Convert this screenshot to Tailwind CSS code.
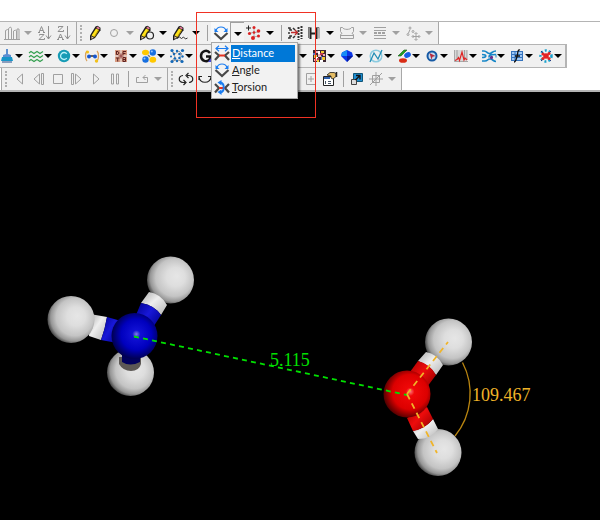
<!DOCTYPE html>
<html lang="en">
<head>
    <meta charset="UTF-8">
    <meta name="viewport" content="width=device-width, initial-scale=1.0">
    <title>Molecule Viewer</title>
    <script src="https://cdn.jsdelivr.net/npm/@tailwindcss/browser@4"></script>
</head>
<body class="bg-white font-['Lato',sans-serif]">
    <!-- Shared shapes -->
    <svg class="hidden">
        <symbol id="arrow" viewBox="0 0 8 4"><path d="M0 0h8L4 4z" fill="currentColor"/></symbol>
        <symbol id="pencil" viewBox="0 0 16 16">
            <path d="M3 15.500V10.500L8.500 1.500l2-.8 3 2v2.500L8 13z" fill="#1a1a1a"/>
            <path d="M4.500 10.500L9 3.500l2.800 1.500L7.500 12z" fill="#ffe21a"/>
            <path d="M7 11.800l4.300-7 .8.400-4.300 7z" fill="#a88a00"/>
            <path d="M9.300 3l1-1.500 2.500 1.500-.8 1.500z" fill="#e87b9c"/>
            <path d="M4.300 11.200l2.500 1.200-2.300 1.600z" fill="#e8c9a0"/>
        </symbol>
        <symbol id="angle" viewBox="0 0 16 16">
            <path d="M1.500 8l6.500 6 6.500-6" fill="none" stroke="#484848" stroke-width="2.200"/>
            <path d="M3 5.500C4.500 .8 11.500 .8 13 5.500" fill="none" stroke="#1a7cf0" stroke-width="1.200"/>
            <path d="M1.500 3v4h4zM14.500 3v4h-4z" fill="#1a7cf0"/>
        </symbol>
        <symbol id="distance" viewBox="0 0 16 16">
            <path d="M2 3.500h12M5 .8L2 3.500l3 2.700M11 .8l3 2.700-3 2.700" fill="none" stroke="#1a7cf0" stroke-width="1.200"/>
            <path d="M1 7l4 3.500L1 15M15 7l-4 3.500L15 15" fill="none" stroke="#484848" stroke-width="2.200"/>
            <path d="M5 10.500h6" stroke="#e43322" stroke-width="2"/>
        </symbol>
        <symbol id="torsion" viewBox="0 0 16 16">
            <path d="M1 5l4 4-4 4.500M15 5l-4 4 4 4.500" fill="none" stroke="#484848" stroke-width="2.200"/>
            <path d="M5 9h6" stroke="#e43322" stroke-width="2"/>
            <path d="M6 3.500c5 .5 5 9.500 0 10" fill="none" stroke="#1a7cf0" stroke-width="2"/>
            <path d="M3.500 3.500l4-2.500v5.500zM3.500 13l4-2.500V16z" fill="#1a7cf0"/>
        </symbol>
    </svg>

    <div class="relative flex min-h-screen flex-col">
        <header class="mt-[21px] border-y border-b-2 border-[#b4b4b4] bg-white">
            <!-- Sketch toolbar -->
            <div class="flex h-[22px]">
                <div class="flex w-[77px] border-r border-[#a8a8a8] bg-[#f0f0f0] pl-0.5">
                    <button aria-label="Chart" class="flex w-[33px] items-center text-[#a0a0a0]">
                        <span class="flex w-[19px] justify-center"><svg class="size-4" viewBox="0 0 16 16" fill="none" stroke="currentColor"><path d="M1.500 14.500v-9l2-1 1 1v9zM4.500 14.500v-11l2-1.500 1 1.500v11zM9.500 14.500V6l2-1 1 1v8.500zM13 14.500V4h2v10.500M0 14.500h16"/></svg></span>
                        <span class="flex w-[14px] justify-center"><svg class="h-1 w-2"><use href="#arrow"/></svg></span>
                    </button>
                    <button aria-label="Sort ascending" class="flex w-[19px] items-center justify-center text-[#909090]"><svg class="size-4" viewBox="0 0 16 16" fill="none" stroke="currentColor"><path d="M2 7.500l2.500-6 2.500 6M3 5.500h3M1 7.500h2M6 7.500h2M2.500 10.500v-1h4.500l-5 5h5.500v-1.500M11.500 1v13M9 10.500l2.500 3.500 2.500-3.500"/></svg></button>
                    <button aria-label="Sort descending" class="flex w-[19px] items-center justify-center text-[#909090]"><svg class="size-4" viewBox="0 0 16 16" fill="none" stroke="currentColor"><path d="M2.500 3V1.500H7l-5 5h5.500V5M2 14.500L4.500 9 7 14.500M3 12.500h3M1 14.500h2M6 14.500h2M11.500 1v13M9 10.500l2.500 3.500 2.500-3.500"/></svg></button>
                </div>
                <div class="flex w-[362px] border-r border-[#a8a8a8] bg-[#f0f0f0]">
                    <span class="flex w-2 items-center justify-center"><span class="h-4 border-l-2 border-dotted border-[#b0b0b0]"></span></span>
                    <button aria-label="Sketch atom" class="flex w-[19px] items-center justify-center"><svg class="size-4"><use href="#pencil"/></svg></button>
                    <button aria-label="Sketch ring" class="flex w-[33px] items-center text-[#a0a0a0]">
                        <span class="flex w-[19px] justify-center"><svg class="size-4" viewBox="0 0 16 16"><circle cx="8" cy="8" r="3.500" fill="none" stroke="currentColor"/></svg></span>
                        <span class="flex w-[14px] justify-center"><svg class="h-1 w-2"><use href="#arrow"/></svg></span>
                    </button>
                    <button aria-label="Sketch fragment" class="flex w-[33px] items-center">
                        <span class="flex w-[19px] justify-center"><svg class="size-4" viewBox="0 0 16 16"><use href="#pencil" x="-2" width="16" height="16"/><circle cx="11" cy="10.500" r="3.500" fill="#f0f0f0" stroke="#222" stroke-width="1.200"/></svg></span>
                        <span class="flex w-[14px] justify-center"><svg class="h-1 w-2"><use href="#arrow"/></svg></span>
                    </button>
                    <button aria-label="Sketch chain" class="flex w-[33px] items-center">
                        <span class="flex w-[19px] justify-center"><svg class="size-4" viewBox="0 0 16 16"><use href="#pencil" x="-2" width="16" height="16"/><path d="M5 13.500l2.500-1.500 2 1.500 2-1.500 2 2 2-1" fill="none" stroke="#333"/></svg></span>
                        <span class="flex w-[14px] justify-center"><svg class="h-1 w-2"><use href="#arrow"/></svg></span>
                    </button>
                    <span class="flex w-2 items-center justify-center"><span class="h-4 border-l border-[#a0a0a0]"></span></span>

                    <div class="relative flex w-[33px]">
                        <button aria-label="Measure angle" class="flex w-[19px] items-center justify-center bg-[#f8f8f8]"><svg class="size-4"><use href="#angle"/></svg></button>
                        <button aria-label="Measure options" aria-expanded="true" class="flex w-[14px] items-center justify-center border-l border-t border-[#a0a0a0] bg-[#f4f4f4]"><svg class="h-1 w-2"><use href="#arrow"/></svg></button>
                        <!-- Measure menu -->
                        <div role="menu" class="absolute top-5 left-0 z-10 w-[87px] border border-[#a8a8a8] bg-[#f2f2f2] p-0.5 text-[11px] leading-[16px] text-[#222] shadow-[2px_2px_2px_rgba(0,0,0,0.5)]">
                            <button role="menuitem" class="flex h-[17px] w-full"><svg class="mr-px size-4 shrink-0"><use href="#distance"/></svg><span class="flex-1 bg-[#0078d7] px-px text-left text-white"><u>D</u>istance</span></button>
                            <button role="menuitem" class="flex h-[17px] w-full"><svg class="mr-px size-4 shrink-0"><use href="#angle"/></svg><span class="flex-1 px-px text-left"><u>A</u>ngle</span></button>
                            <button role="menuitem" class="flex h-[17px] w-full"><svg class="mr-px size-4 shrink-0"><use href="#torsion"/></svg><span class="flex-1 px-px text-left"><u>T</u>orsion</span></button>
                        </div>
                    </div>
                    <button aria-label="Atoms" class="flex w-[33px] items-center">
                        <span class="flex w-[19px] justify-center"><svg class="size-4" viewBox="0 0 16 16"><path d="M0 3h5M2.500 .5v5" stroke="#222"/><path d="M8 4v8M4 8l8-1M7.500 12l5-1" stroke="#aaa"/><g fill="#dc2222"><circle cx="8" cy="2.500" r="1.500"/><circle cx="3.500" cy="8.500" r="1.600"/><circle cx="8" cy="7.500" r="1.300"/><circle cx="12.500" cy="6" r="1.800"/><circle cx="7" cy="13" r="2"/><circle cx="12.500" cy="11" r="1.500"/></g></svg></span>
                        <span class="flex w-[14px] justify-center"><svg class="h-1 w-2"><use href="#arrow"/></svg></span>
                    </button>
                    <span class="flex w-2 items-center justify-center"><span class="h-4 border-l border-[#a0a0a0]"></span></span>
                    <button aria-label="Build lattice" class="flex w-[19px] items-center justify-center"><svg class="size-4" viewBox="0 0 16 16" fill="none"><path d="M1 3h2v2h2M1 13h2v-2h2M1 8h2M6 3l2 2M6 13l2-2" stroke="#333" stroke-width="1.500"/><path d="M4 7.500h6M8 5l2.500 2.500L8 10" stroke="#c22c2c" stroke-width="1.300"/><path d="M11.500 2v13M14.500 1v13" stroke="#333" stroke-width="2" stroke-dasharray="2 1"/></svg></button>
                    <button aria-label="Adjust hydrogen" class="flex w-[33px] items-center">
                        <span class="flex w-[19px] justify-center"><svg class="size-4" viewBox="0 0 16 16" fill="none"><path d="M4.500 3v11M10.500 3v11M5 8.500h5" stroke="#222" stroke-width="2"/><path d="M2.500 2.500h3M2.500 2v11M9 2.500h4v11" stroke="#777"/></svg></span>
                        <span class="flex w-[14px] justify-center"><svg class="h-1 w-2"><use href="#arrow"/></svg></span>
                    </button>
                    <button aria-label="Surface" class="flex w-[33px] items-center text-[#a0a0a0]">
                        <span class="flex w-[19px] justify-center"><svg class="size-4" viewBox="0 0 16 16" fill="none" stroke="currentColor"><path d="M1.500 2.500h2c1 2.500 8 2.500 9 0h2v4l-1.500 2 1.500 1v4h-13v-4l1.500-1-1.500-2zM2 10.500h12"/></svg></span>
                        <span class="flex w-[14px] justify-center"><svg class="h-1 w-2"><use href="#arrow"/></svg></span>
                    </button>
                    <button aria-label="Layers" class="flex w-[33px] items-center text-[#a0a0a0]">
                        <span class="flex w-[19px] justify-center"><svg class="size-4" viewBox="0 0 16 16" fill="none" stroke="currentColor"><path d="M2 2.500h12M2 5.500h12M2 10.500h12M2 13.500h12"/><path d="M2 8h12" stroke-width="2" stroke-dasharray="3 1"/></svg></span>
                        <span class="flex w-[14px] justify-center"><svg class="h-1 w-2"><use href="#arrow"/></svg></span>
                    </button>
                    <button aria-label="Move atoms" class="flex w-[33px] items-center text-[#a0a0a0]">
                        <span class="flex w-[19px] justify-center"><svg class="size-4" viewBox="0 0 16 16" fill="none" stroke="currentColor"><circle cx="5" cy="3" r="1"/><circle cx="3" cy="9.500" r="1"/><circle cx="8" cy="6.500" r="1"/><path d="M5 4.500L3.500 8M7.500 11.500h7M11 8v7M9.500 9L11 7.500 12.500 9M9.500 14l1.500 1.500 1.500-1.500M8.500 10L7 11.500 8.500 13M13.500 10l1.500 1.500-1.500 1.500"/></svg></span>
                        <span class="flex w-[14px] justify-center"><svg class="h-1 w-2"><use href="#arrow"/></svg></span>
                    </button>
                </div>
            </div>

            <!-- Modules toolbar -->
            <div class="-ml-[3px] flex h-6 w-[570px] border-y border-r-2 border-[#b4b4b4] bg-[#f0f0f0] pr-px">
                <button aria-label="Amorphous cell" class="flex flex-1 items-center justify-center"><svg class="size-4 shrink-0" viewBox="0 0 16 16"><path d="M7 1h2v5l3 1v2H4V7l3-1z" fill="#5b8ed0"/><path d="M3 9h10l1 4H2z" fill="#1795c8"/><path d="M3 14h10" stroke="#274a8a"/></svg><svg class="h-1 w-2 shrink-0"><use href="#arrow"/></svg></button>
                <button aria-label="Blends" class="flex flex-1 items-center justify-center"><svg class="size-4 shrink-0" viewBox="0 0 16 16" fill="none" stroke="#35a050" stroke-width="1.200"><path d="M1 5l2-1.500 3 2 3-2 3 2 3-2M1 9l2-1.500 3 2 3-2 3 2 3-2M1 13l2-1.500 3 2 3-2 3 2 3-2"/></svg><svg class="h-1 w-2 shrink-0"><use href="#arrow"/></svg></button>
                <button aria-label="CASTEP" class="flex flex-1 items-center justify-center"><svg class="size-4 shrink-0" viewBox="0 0 16 16"><circle cx="8" cy="8" r="6.200" fill="#169bb5"/><path d="M10.800 5.800a3.500 3.500 0 1 0 0 4.400" fill="none" stroke="#b9f1fa" stroke-width="1.300"/></svg><svg class="h-1 w-2 shrink-0"><use href="#arrow"/></svg></button>
                <button aria-label="Conformers" class="flex flex-1 items-center justify-center"><svg class="size-4 shrink-0" viewBox="0 0 16 16"><path d="M3 3C1 5 1 11 3 13M13 3c2 2 2 8 0 10" fill="none" stroke="#d9a15b" stroke-width="1.300"/><path d="M5 8h6" fill="none" stroke="#333" stroke-width="1.500"/><circle cx="3.500" cy="4" r="1.600" fill="#f2c11b"/><circle cx="5" cy="8.500" r="2" fill="#1556cf"/><circle cx="11" cy="8.500" r="2" fill="#1556cf"/><circle cx="12.500" cy="13" r="1.700" fill="#f2c11b"/></svg><svg class="h-1 w-2 shrink-0"><use href="#arrow"/></svg></button>
                <button aria-label="DFTB" class="flex flex-1 items-center justify-center"><svg class="size-4 shrink-0" viewBox="0 0 16 16"><path d="M2 2h5.500v5.500H2zM8.500 2H14v5.500H8.500zM2 8.500h5.500V14H2zM8.500 8.500H14V14H8.500z" fill="#d69a80"/><path d="M3.500 3v3.500h1.500l1-1.500-1-1.500H3.500M10 7V3.500h3M10 5.500h2.500M3 10h3.500M4.700 10v3.500M10 9.500h2.500v4H10zM10 11.500h2.500" fill="none" stroke="#5c2020"/><path d="M5.500 8h5M8 5.500v5" stroke="#862f2f"/></svg><svg class="h-1 w-2 shrink-0"><use href="#arrow"/></svg></button>
                <button aria-label="DMol3" class="flex flex-1 items-center justify-center"><svg class="size-4 shrink-0" viewBox="0 0 16 16"><ellipse cx="4.500" cy="4.500" rx="3.500" ry="2.700" fill="#ffc800"/><circle cx="11.800" cy="4.500" r="3.200" fill="#176fe0"/><circle cx="4.500" cy="11.500" r="3.200" fill="#176fe0"/><ellipse cx="11.800" cy="11.800" rx="3.400" ry="3" fill="#ffc800"/><circle cx="10.800" cy="3.500" r="1" fill="#9bc9ff"/><circle cx="3.500" cy="10.500" r="1" fill="#9bc9ff"/><path d="M7 7l2 2" stroke="#777" stroke-width="1.500"/></svg><svg class="h-1 w-2 shrink-0"><use href="#arrow"/></svg></button>
                <button aria-label="Forcite" class="flex flex-1 items-center justify-center"><svg class="size-4 shrink-0" viewBox="0 0 16 16"><path d="M3 3l3 3 4-3 3 3-3 4 3 3-5-1-5 1 3-4z" fill="none" stroke="#999"/><g fill="#1469b8"><circle cx="3" cy="2.500" r="1.600"/><circle cx="8" cy="3" r="1.200"/><circle cx="13.500" cy="2.500" r="1.600"/><circle cx="5" cy="6" r="1.200"/><circle cx="10.500" cy="6" r="1.300"/><circle cx="2" cy="8.500" r="1"/><circle cx="13.500" cy="8.500" r="1.200"/><circle cx="6" cy="10.500" r="1.300"/><circle cx="10.500" cy="10" r="1.300"/><circle cx="3" cy="13.500" r="1.600"/><circle cx="8" cy="13" r="1.200"/><circle cx="13" cy="13.500" r="1.600"/></g></svg><svg class="h-1 w-2 shrink-0"><use href="#arrow"/></svg></button>
                <button aria-label="GULP" class="flex flex-1 items-center justify-center"><svg class="size-4 shrink-0" viewBox="0 0 16 16" fill="none"><path d="M12 5C9 1 3 3 3 8s6 7 9 3V8.500H8" stroke="#151515" stroke-width="2.500"/><path d="M10 14l3-4 2 4z" fill="#4a4ad0"/></svg><svg class="h-1 w-2 shrink-0"><use href="#arrow"/></svg></button>
                <button aria-label="Kinetix" class="flex flex-1 items-center justify-center"><span class="w-4"></span><svg class="h-1 w-2 shrink-0"><use href="#arrow"/></svg></button>
                <button aria-label="Mesocite" class="flex flex-1 items-center justify-center"><span class="w-4"></span><svg class="h-1 w-2 shrink-0"><use href="#arrow"/></svg></button>
                <button aria-label="Mesodyn" class="flex flex-1 items-center justify-center"><span class="w-4"></span><svg class="h-1 w-2 shrink-0"><use href="#arrow"/></svg></button>
                <button aria-label="Morphology" class="flex flex-1 items-center justify-center"><svg class="size-4 shrink-0" viewBox="0 0 16 16"><path d="M2 2h13v12H2z" fill="#3c2630"/><path d="M3 7h3v3H3zM10 3h3v2h-3zM11 9h3v3h-3zM6 12h2v2H6z" fill="#f0ca35"/><path d="M4 3h3v2H4zM7 6h3v3H7zM3 11h3v2H3zM12 6h2v2h-2z" fill="#f0b0c0"/><path d="M7 3h2v3H7zM4 9h3v2H4zM9 12h3v2H9z" fill="#fff"/><path d="M9 5h3v2H9zM6 10h2v2H6z" fill="#c33b4b"/><path d="M10 8h1v4h-1zM2 5h2v2H2z" fill="#5d72c4"/></svg><svg class="h-1 w-2 shrink-0"><use href="#arrow"/></svg></button>
                <button aria-label="Crystal" class="flex flex-1 items-center justify-center"><svg class="size-4 shrink-0" viewBox="0 0 16 16"><path d="M8 2l5 2.500 1 3.500-6 6-6-6 1-3.500z" fill="#0a35e8"/><path d="M3 4.500L8 2v6L2 8z" fill="#168cf5"/><path d="M8 8l6 0-6 6z" fill="#071ba0"/></svg><svg class="h-1 w-2 shrink-0"><use href="#arrow"/></svg></button>
                <button aria-label="ONETEP" class="flex flex-1 items-center justify-center"><svg class="size-4 shrink-0" viewBox="0 0 16 16" fill="none"><circle cx="8" cy="8" r="5.800" stroke="#8bcbe0" stroke-width="1.500"/><path d="M2 14L6 5l4 6 4-9" stroke="#238db5" stroke-width="1.300"/></svg><svg class="h-1 w-2 shrink-0"><use href="#arrow"/></svg></button>
                <button aria-label="Polymorph" class="flex flex-1 items-center justify-center"><svg class="size-4 shrink-0" viewBox="0 0 16 16"><path d="M2 8l6-6h3L5 8z" fill="#20a31f" stroke="#1b571b" stroke-width=".6"/><ellipse cx="11.500" cy="7" rx="3.500" ry="2.700" fill="#155de8" transform="rotate(-30 11.500 7)"/><ellipse cx="7" cy="12.500" rx="4" ry="2.300" fill="#d92c15"/></svg><svg class="h-1 w-2 shrink-0"><use href="#arrow"/></svg></button>
                <button aria-label="QSAR" class="flex flex-1 items-center justify-center"><svg class="size-4 shrink-0" viewBox="0 0 16 16"><circle cx="8" cy="8" r="4.500" fill="#c3d9f0" stroke="#165aa5" stroke-width="2"/><path d="M5.500 5l6 3-3 .8-1 3z" fill="#b52c40"/></svg><svg class="h-1 w-2 shrink-0"><use href="#arrow"/></svg></button>
                <button aria-label="Reflex" class="flex flex-1 items-center justify-center"><svg class="size-4 shrink-0" viewBox="0 0 16 16"><path d="M2 2h12v11H2z" fill="#d8d8d8"/><path d="M1.500 2v11.500H15M4 2v10M11.500 2v10M14 2v10" fill="none" stroke="#888" stroke-width=".7"/><path d="M2 12.500l2-1 1.500-2 1 3L9 4l2 8 1-2 2 2" fill="none" stroke="#e12525" stroke-width="1.200"/></svg><svg class="h-1 w-2 shrink-0"><use href="#arrow"/></svg></button>
                <button aria-label="Sorption" class="flex flex-1 items-center justify-center"><svg class="size-4 shrink-0" viewBox="0 0 16 16" fill="none" stroke="#1686c7" stroke-width="1.700"><path d="M1 3h2c3 0 3 2.500 5.500 2.500S11 3 15 3M1 6.500c5 0 5 3 0 3M15 6.500c-7 0-7 1-7 3M1 13h3c3 0 2-2 5-2s3 2.500 6 2.500"/><path d="M15 6.500v3" stroke-width="1"/><circle cx="10.500" cy="9.500" r=".8" stroke="#6a308c"/></svg><svg class="h-1 w-2 shrink-0"><use href="#arrow"/></svg></button>
                <button aria-label="Synthia" class="flex flex-1 items-center justify-center"><svg class="size-4 shrink-0" viewBox="0 0 16 16"><path d="M2 3h12v10H2z" fill="#9fc8f5"/><path d="M2 3.500h12M2 6.500h12M2 9.500h12M2 12.500h12M2.500 3v10M6 3v10M13.500 3v10" fill="none" stroke="#3573bd"/><path d="M11 2c-3-1-2 5-3 7s-1 5-3 5M6 8h5" fill="none" stroke="#111" stroke-width="1.300"/></svg><svg class="h-1 w-2 shrink-0"><use href="#arrow"/></svg></button>
                <button aria-label="VAMP" class="flex flex-1 items-center justify-center"><svg class="size-4 shrink-0" viewBox="0 0 16 16"><circle cx="8" cy="8" r="5.500" fill="none" stroke="#18a0cc" stroke-width="2.500" stroke-dasharray="2 2"/><path d="M3 3l2 2M13 3l-2 2M3 13l2-2M13 13l-2-2" stroke="#243a80"/><g fill="#e32424"><circle cx="8" cy="8" r="2.800"/><circle cx="5" cy="6" r="1.600"/><circle cx="11" cy="5.500" r="1.600"/><circle cx="5" cy="10.500" r="1.600"/><circle cx="11" cy="10.500" r="1.600"/></g></svg><svg class="h-1 w-2 shrink-0"><use href="#arrow"/></svg></button>
            </div>

            <!-- Animation toolbar -->
            <div class="flex h-[22px]">
                <div class="ml-px flex w-[167px] border-x border-[#a8a8a8] bg-[#f0f0f0] text-[#a0a0a0]">
                    <span class="flex w-2 items-center justify-center"><span class="h-4 border-l-2 border-dotted border-[#b0b0b0]"></span></span>
                    <button aria-label="Play backwards" class="flex w-[19px] items-center justify-center"><svg class="size-4" viewBox="0 0 16 16" fill="none" stroke="currentColor"><path d="M10.500 3v10L5 8z"/></svg></button>
                    <button aria-label="Step back" class="flex w-[19px] items-center justify-center"><svg class="size-4" viewBox="0 0 16 16" fill="none" stroke="currentColor"><path d="M8.500 3v10L3 8zM10.500 2.500h2v11h-2z"/></svg></button>
                    <button aria-label="Stop" class="flex w-[19px] items-center justify-center"><svg class="size-4" viewBox="0 0 16 16" fill="none" stroke="currentColor"><path d="M3.500 3.500h9v9h-9z"/></svg></button>
                    <button aria-label="Step forward" class="flex w-[19px] items-center justify-center"><svg class="size-4" viewBox="0 0 16 16" fill="none" stroke="currentColor"><path d="M6.500 3v10L12 8zM2.500 2.500h2v11h-2z"/></svg></button>
                    <button aria-label="Play" class="flex w-[19px] items-center justify-center"><svg class="size-4" viewBox="0 0 16 16" fill="none" stroke="currentColor"><path d="M5.500 3v10L11 8z"/></svg></button>
                    <button aria-label="Pause" class="flex w-[19px] items-center justify-center"><svg class="size-4" viewBox="0 0 16 16" fill="none" stroke="currentColor"><path d="M4.500 3h2v10h-2zM9.500 3h2v10h-2z"/></svg></button>
                    <span class="flex w-2 items-center justify-center"><span class="h-4 border-l border-[#a0a0a0]"></span></span>
                    <button aria-label="Loop mode" class="flex w-[33px] items-center">
                        <span class="flex w-[19px] justify-center"><svg class="size-4" viewBox="0 0 16 16" fill="none" stroke="currentColor"><path d="M5 6.500H2.500v5h11v-5H9M11.500 4L9 6.500 11.500 9"/></svg></span>
                        <span class="flex w-[14px] justify-center"><svg class="h-1 w-2"><use href="#arrow"/></svg></span>
                    </button>
                </div>
                <div class="flex w-[234px] border-r border-[#a8a8a8] bg-[#f0f0f0]">
                    <span class="flex w-2 items-center justify-center"><span class="h-4 border-l-2 border-dotted border-[#b0b0b0]"></span></span>
                    <button aria-label="Rotate left" class="flex w-[19px] items-center justify-center"><svg class="size-4" viewBox="0 0 16 16" fill="none" stroke="#222" stroke-width="1.200"><path d="M5 4.500C0 5 0 11 5 11.500h2M11 11.500c5-.5 5-6.500 0-7H9M5.500 9L8 11.500 5.500 14M10.500 2L8 4.500 10.500 7"/></svg></button>
                    <button aria-label="Rotate right" class="flex w-[19px] items-center justify-center"><svg class="size-4" viewBox="0 0 16 16" fill="none" stroke="#222" stroke-width="1.200"><path d="M2 9V5.500H5M2 6c1 7 11 7 12 0M11 5.500h3V9"/></svg></button>
                    <span class="w-[87px]"></span>
                    <button aria-label="Fit to view" class="flex w-[19px] items-center justify-center text-[#a0a0a0]"><svg class="size-4" viewBox="0 0 16 16" fill="none" stroke="currentColor"><path d="M3.500 2.500h9v11h-9zM5 8h6M8 5v6"/></svg></button>
                    <button aria-label="Properties" class="flex w-[19px] items-center justify-center"><svg class="size-4" viewBox="0 0 16 16"><path d="M1.500 5.500h10v9h-10z" fill="#fff" stroke="#222"/><path d="M2 6h6v2H2z" fill="#3162ad"/><path d="M3.500 10v3M6 10.500h3M6 12.500h3" stroke="#456"/><path d="M5 4l3-2.500h4l2 1v3l-3 2.500-2-1V5z" fill="#e4bc63" stroke="#222" stroke-width=".8"/><path d="M14.500 1v5" stroke="#222" stroke-width="1.500"/></svg></button>
                    <span class="flex w-2 items-center justify-center"><span class="h-4 border-l border-[#a0a0a0]"></span></span>
                    <button aria-label="Copy view" class="flex w-[19px] items-center justify-center"><svg class="size-4" viewBox="0 0 16 16"><path d="M4.500 2.500h9v8h-9z" fill="#1f8ed2" stroke="#157"/><path d="M2.500 8.500h5v5h-5z" fill="#ddd" stroke="#444"/><path d="M6.500 9l4-4M7 4.500h4v4" fill="none" stroke="#111" stroke-width="1.300"/></svg></button>
                    <button aria-label="Cell frame" class="flex w-[33px] items-center text-[#a0a0a0]">
                        <span class="flex w-[19px] justify-center"><svg class="size-4" viewBox="0 0 16 16" fill="none" stroke="currentColor"><path d="M4.500 4.500h7v7h-7zM8 1v14M1 8h14M2 14L14 2"/></svg></span>
                        <span class="flex w-[14px] justify-center"><svg class="h-1 w-2"><use href="#arrow"/></svg></span>
                    </button>
                </div>
            </div>
        </header>

        <!-- 3D view -->
        <main class="flex-1 bg-black">
            <svg class="block w-full font-['Liberation_Serif',serif] text-[18px]" viewBox="0 92 600 428">
                <defs>
                    <radialGradient id="hydrogen" cx=".56" cy=".46" r=".57" fx=".64" fy=".42">
                        <stop offset="0" stop-color="#e6e6e6"/><stop offset=".35" stop-color="#dedede"/><stop offset=".7" stop-color="#c4c4c4"/><stop offset=".88" stop-color="#969696"/><stop offset="1" stop-color="#444"/>
                    </radialGradient>
                    <radialGradient id="nitrogen" cx=".54" cy=".47" r=".55" fx=".54" fy=".46">
                        <stop offset="0" stop-color="#8080e8"/><stop offset=".16" stop-color="#1010d4"/><stop offset=".6" stop-color="#0000be"/><stop offset="1" stop-color="#000048"/>
                    </radialGradient>
                    <radialGradient id="oxygen" cx=".56" cy=".46" r=".57" fx=".57" fy=".45">
                        <stop offset="0" stop-color="#ff7777"/><stop offset=".16" stop-color="#f00808"/><stop offset=".65" stop-color="#dc0000"/><stop offset="1" stop-color="#500000"/>
                    </radialGradient>
                    <linearGradient id="whiteBond" x1="0" y1="0" x2="1" y2="1">
                        <stop offset="0" stop-color="#aaa"/><stop offset=".45" stop-color="#eee"/><stop offset="1" stop-color="#b4b4b4"/>
                    </linearGradient>
                    <linearGradient id="blueBond" x1="0" y1="0" x2="1" y2=".8">
                        <stop offset="0" stop-color="#000090"/><stop offset=".5" stop-color="#1818d8"/><stop offset="1" stop-color="#000090"/>
                    </linearGradient>
                    <linearGradient id="redBond" x1="0" y1="0" x2="1" y2=".8">
                        <stop offset="0" stop-color="#a80000"/><stop offset=".5" stop-color="#ee0c0c"/><stop offset="1" stop-color="#a00000"/>
                    </linearGradient>
                </defs>

                <!-- Ammonia -->
                <circle cx="130.500" cy="372.500" r="23.500" fill="url(#hydrogen)"/>
                <path d="M119 357v7q4 7 12 7t10-7v-8z" fill="#5c5855"/>
                <path d="M122 354v8q8 5 18 0v-8z" fill="#00005c"/>
                <circle cx="170.500" cy="280" r="23.500" fill="url(#hydrogen)"/>
                <path d="M149 292q12 2 18 13l-6 10q-7-10-20-12z" fill="url(#whiteBond)"/>
                <path d="M141 303q13 2 20 12l-9 14-16-14z" fill="url(#blueBond)"/>
                <path d="M90 314l17 3q-2 12-6 23l-12-4z" fill="url(#whiteBond)"/>
                <path d="M107 317l14 4-4 22-16-3q4-11 6-23z" fill="url(#blueBond)"/>
                <circle cx="71" cy="319.500" r="23.500" fill="url(#hydrogen)"/>
                <circle cx="134.500" cy="336" r="23" fill="url(#nitrogen)"/>

                <!-- Water -->
                <circle cx="448.500" cy="342" r="23.500" fill="url(#hydrogen)"/>
                <circle cx="438" cy="452.500" r="23.500" fill="url(#hydrogen)"/>
                <path d="M426 352q11 2 17 13l-7 10q-6-10-18-14z" fill="url(#whiteBond)"/>
                <path d="M418 361q12 3 18 14l-9 12-17-15z" fill="url(#redBond)"/>
                <path d="M413 431q13-3 20-12l5 10q-7 10-20 10z" fill="url(#whiteBond)"/>
                <path d="M407 418l20-11 6 12q-8 10-20 12z" fill="url(#redBond)"/>
                <circle cx="407" cy="394" r="23.500" fill="url(#oxygen)"/>

                <!-- Measurements -->
                <path d="M134 336.500l273 58.500" stroke="#00e000" stroke-width="1.800" stroke-dasharray="5 4.200"/>
                <path d="M407 394l41-52M407 394l30 59" stroke="#f0b428" stroke-width="1.800" stroke-dasharray="6 4.500"/>
                <path d="M462.500 362.500a67 67 0 0 1-7.500 73.500" fill="none" stroke="#b98510" stroke-width="1.300"/>
                <text x="270" y="366" fill="#00e000">5.115</text>
                <text x="472" y="401" fill="#f0b428">109.467</text>
            </svg>
        </main>

        <!-- Callout frame around the measure menu -->
        <div class="pointer-events-none absolute top-3 left-[196px] z-20 h-[106px] w-[120px] border border-[#f03224]"></div>
    </div>
</body>
</html>
